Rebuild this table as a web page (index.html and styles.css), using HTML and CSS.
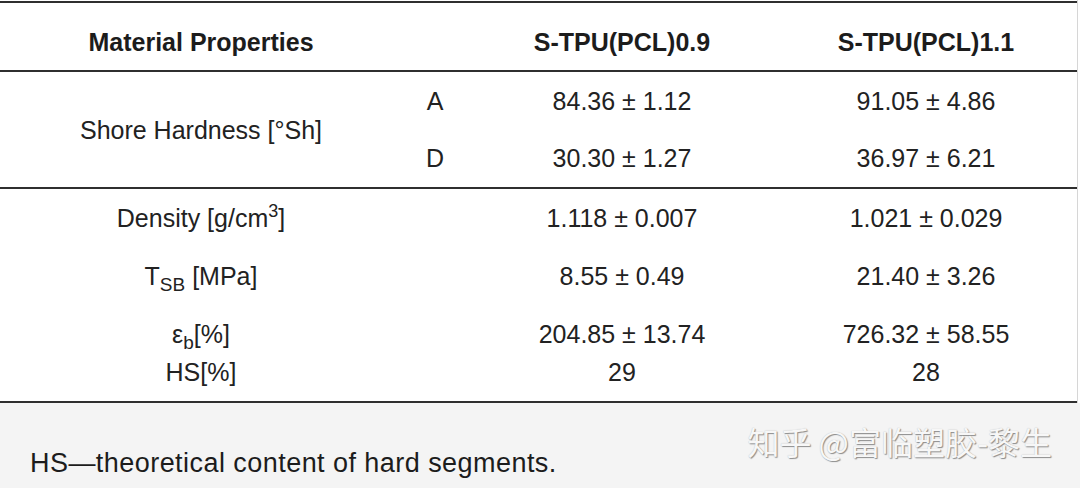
FILE: index.html
```html
<!DOCTYPE html>
<html lang="en">
<head>
<meta charset="utf-8">
<title>Material Properties</title>
<link rel="stylesheet" href="styles.css">
</head>
<body>
<div class="page">
  <div class="table">
    <div class="grid head">
      <div class="cell">Material Properties</div>
      <div class="cell"></div>
      <div class="cell">S-TPU(PCL)0.9</div>
      <div class="cell">S-TPU(PCL)1.1</div>
    </div>
    <div class="grid shore">
      <div class="cell label-span">Shore Hardness [°Sh]</div>
      <div class="cell">A</div>
      <div class="cell">84.36 ± 1.12</div>
      <div class="cell">91.05 ± 4.86</div>
      <div class="cell">D</div>
      <div class="cell">30.30 ± 1.27</div>
      <div class="cell">36.97 ± 6.21</div>
    </div>
    <div class="grid props">
      <div class="cell"><span>Density [g/cm<sup>3</sup>]</span></div>
      <div class="cell"></div>
      <div class="cell">1.118 ± 0.007</div>
      <div class="cell">1.021 ± 0.029</div>

      <div class="cell"><span>T<sub>SB</sub> [MPa]</span></div>
      <div class="cell"></div>
      <div class="cell">8.55 ± 0.49</div>
      <div class="cell">21.40 ± 3.26</div>

      <div class="cell"><span>ε<sub>b</sub>[%]</span></div>
      <div class="cell"></div>
      <div class="cell">204.85 ± 13.74</div>
      <div class="cell">726.32 ± 58.55</div>

      <div class="cell">HS[%]</div>
      <div class="cell"></div>
      <div class="cell">29</div>
      <div class="cell">28</div>
    </div>
  </div>
  <div class="footer">
    <p class="note">HS—theoretical content of hard segments.</p>
    <span class="watermark">知乎 @富临塑胶-黎生</span>
  </div>
</div>
</body>
</html>
```

FILE: styles.css
```css
html, body {
  margin: 0;
  padding: 0;
  background: #ffffff;
}

body {
  width: 1080px;
  height: 488px;
  overflow: hidden;
  font-family: "Liberation Sans", Arial, sans-serif;
  color: #222222;
}

.page {
  display: flex;
  flex-direction: column;
  height: 488px;
}

.table {
  padding-top: 1px;
  background: #ffffff;
  border-right: 1px solid #d6d6d6;
  width: 1077px;
}

.grid {
  display: grid;
  grid-template-columns: 402px 66px 308px 300px;
  border-top: 2px solid #2f2f2f;
}

.cell {
  display: flex;
  align-items: center;
  justify-content: center;
  font-size: 25px;
  line-height: 28px;
  white-space: nowrap;
}

.head {
  padding-top: 10px;
  height: 57px;
}

.head .cell {
  font-weight: bold;
  font-size: 25px;
  color: #1c1c1c;
}

.shore {
  grid-template-rows: 57.5px 57.5px;
}

.shore .label-span {
  grid-row: 1 / span 2;
}

.props {
  grid-template-rows: 58px 58px 57px 20px;
  padding-bottom: 19px;
  border-bottom: 2px solid #2f2f2f;
}

.props .cell {
  line-height: 20px;
}

sup {
  font-size: 18px;
  line-height: 0;
  vertical-align: 10px;
}

sub {
  font-size: 19px;
  line-height: 0;
  vertical-align: -6px;
}

.footer {
  position: relative;
  flex: 1;
  background: #f4f4f4;
}

.note {
  margin: 0;
  padding: 45px 0 0 30px;
  font-size: 27px;
  line-height: 30px;
  letter-spacing: 0.45px;
  color: #1c1c1c;
}

.watermark {
  position: absolute;
  right: 28px;
  top: 20px;
  font-family: "Noto Sans CJK SC", "Liberation Sans", sans-serif;
  font-size: 32px;
  line-height: 36px;
  color: #f7f7f7;
  text-shadow: 1px 1px 1px #8c8c8c, 0 0 1px #bbbbbb;
}
```
